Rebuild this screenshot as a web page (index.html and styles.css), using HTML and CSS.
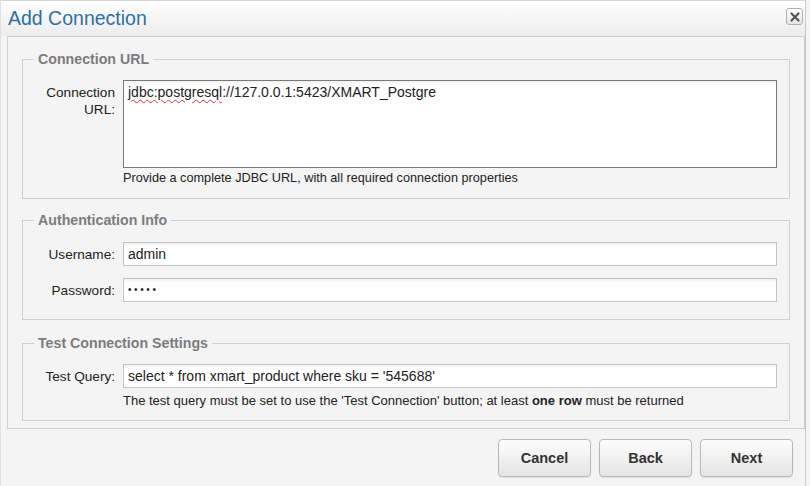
FILE: index.html
```html
<!DOCTYPE html>
<html>
<head>
<meta charset="utf-8">
<link rel="stylesheet" href="styles.css">
</head>
<body>
<div class="dialog">
  <div class="titlebar">
    <h1 class="title">Add Connection</h1>
    <button class="close" aria-label="Close">
      <svg width="12" height="12" viewBox="0 0 12 12"><path d="M2.5 2.5 L9.5 9.5 M9.5 2.5 L2.5 9.5" stroke="#555" stroke-width="2.2" stroke-linecap="round"/></svg>
    </button>
  </div>
  <div class="panel">
    <fieldset class="group g1">
      <legend>Connection URL</legend>
      <div class="row row-top">
        <label class="label">Connection URL:</label>
        <div class="field textarea"><span class="misspelt">jdbc:postgresql</span>://127.0.0.1:5423/XMART_Postgre</div>
      </div>
      <div class="help">Provide a complete JDBC URL, with all required connection properties</div>
    </fieldset>
    <fieldset class="group g2">
      <legend>Authentication Info</legend>
      <div class="row">
        <label class="label">Username:</label>
        <div class="field input">admin</div>
      </div>
      <div class="row row-gap">
        <label class="label">Password:</label>
        <div class="field input pw">•••••</div>
      </div>
    </fieldset>
    <fieldset class="group g3">
      <legend>Test Connection Settings</legend>
      <div class="row row-q">
        <label class="label">Test Query:</label>
        <div class="field input">select * from xmart_product where sku = '545688'</div>
      </div>
      <div class="help help2">The test query must be set to use the 'Test Connection' button; at least <b>one row</b> must be returned</div>
    </fieldset>
  </div>
  <div class="footer">
    <button class="btn">Cancel</button>
    <button class="btn">Back</button>
    <button class="btn">Next</button>
  </div>
</div>
</body>
</html>
```
FILE: styles.css
```css
html, body {
  margin: 0;
  padding: 0;
  background: #f4f4f4;
}
body {
  width: 810px;
  height: 486px;
  overflow: hidden;
  font-family: "Liberation Sans", Arial, sans-serif;
  color: #222;
}
.dialog {
  width: 806px;
  height: 486px;
  box-sizing: border-box;
  border-right: 1px solid #c8c8c8;
  border-left: 1px solid #e0e0e0;
  border-top: 1px solid #d8d8d8;
  background: #f4f4f4;
  display: flex;
  flex-direction: column;
}
.titlebar {
  height: 35px;
  flex: none;
  display: flex;
  align-items: flex-start;
  justify-content: space-between;
  background: linear-gradient(#ffffff, #ececec);
  padding: 0 2px 0 7px;
}
.title {
  margin: 5px 0 0 0;
  font-weight: normal;
  font-size: 19.5px;
  line-height: 24px;
  color: #2f6fa5;
}
.close {
  margin-top: 7px;
  width: 17px;
  height: 17px;
  padding: 0;
  border: 1px solid #b0b0b0;
  border-radius: 3px;
  background: linear-gradient(#ffffff, #e4e4e4);
  display: flex;
  align-items: center;
  justify-content: center;
}
.panel {
  flex: none;
  margin-left: 6px;
  border: 1px solid #cfcfcf;
  background: #f4f4f4;
  padding: 14px 14px 7px 14px;
}
.group {
  margin: 0;
  border: 1px solid #cfcfcf;
  padding: 0 12px 0 0;
}
.g2 {
  margin-top: 13px;
  padding-bottom: 17px;
}
.g3 {
  margin-top: 15px;
}
legend {
  margin-left: 11px;
  padding: 0 4px 0 4px;
  font-weight: bold;
  font-size: 14.2px;
  line-height: 16px;
  height: 16px;
  color: #7c7c7c;
}
.row {
  display: grid;
  grid-template-columns: 92px 1fr;
  column-gap: 8px;
  align-items: center;
  margin-top: 14px;
}
.row-top {
  align-items: start;
  margin-top: 13px;
}
.row-gap {
  margin-top: 12px;
}
.row-q {
  margin-top: 13px;
}
.label {
  text-align: right;
  font-size: 13.6px;
  line-height: 17px;
  color: #222;
}
.row-top .label {
  padding-top: 4px;
}
.field {
  background: #fff;
  box-sizing: border-box;
  font-size: 14px;
  color: #222;
  padding: 0 4px;
  box-shadow: inset 0 3px 3px -1px rgba(0,0,0,0.06);
}
.textarea {
  height: 88px;
  border: 1px solid #7a7a7a;
  padding-top: 2px;
  line-height: 18px;
}
.misspelt {
  text-decoration: underline wavy #d33;
  text-decoration-thickness: 1px;
  text-underline-offset: 2px;
}
.input {
  height: 24px;
  border: 1px solid #c2c2c2;
  line-height: 22px;
}
.pw {
  font-size: 10px;
  letter-spacing: 2.6px;
}
.help {
  margin: 2px 0 12px 100px;
  font-size: 12.7px;
  line-height: 16px;
  color: #222;
}
.help2 {
  margin-top: 5px;
  margin-bottom: 11px;
  font-size: 13px;
}
.footer {
  flex: 1;
  display: flex;
  justify-content: flex-end;
  align-items: flex-start;
  gap: 8px;
  padding: 10px 12px 0 0;
}
.btn {
  width: 93px;
  height: 38px;
  border: 1px solid #b8b8b8;
  border-radius: 4px;
  background: linear-gradient(#fdfdfd, #e5e5e5);
  box-shadow: 0 1px 1px rgba(0,0,0,0.08);
  font-family: "Liberation Sans", Arial, sans-serif;
  font-weight: bold;
  font-size: 14.5px;
  color: #333;
  padding: 0;
}
```
